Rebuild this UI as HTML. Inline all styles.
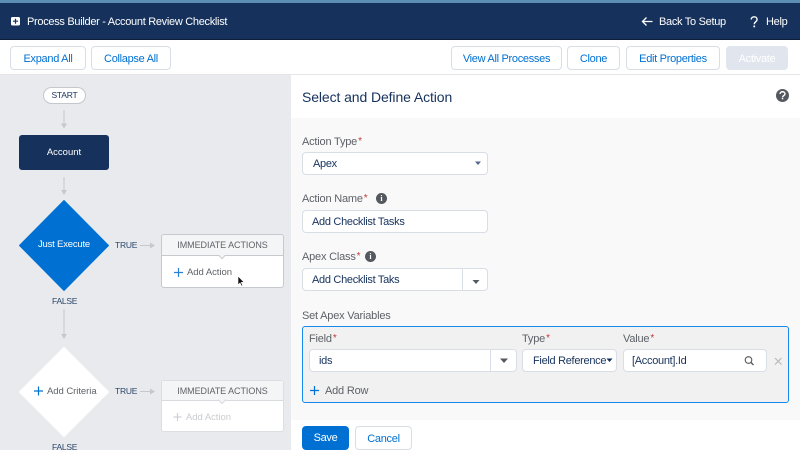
<!DOCTYPE html>
<html><head><meta charset="utf-8"><style>
*{box-sizing:border-box}
html,body{margin:0;padding:0}
body{width:800px;height:450px;overflow:hidden;position:relative;background:#fff;font-family:"Liberation Sans",sans-serif;font-size:11px;letter-spacing:-.3px;color:#16325c}
.a{position:absolute;white-space:nowrap}
.btn{position:absolute;top:46px;height:24px;border:1px solid #d8dde6;border-radius:4px;background:#fff;color:#0070d2;text-align:center;line-height:24px;font-size:11px}
.lab{position:absolute;white-space:nowrap;color:#5e6268;font-size:11px;letter-spacing:-.2px;line-height:14px}
.lab i{color:#c23934;font-style:normal;font-size:10px;margin-left:1px;position:relative;top:-1px}
.inp{position:absolute;background:#fff;border:1px solid #d8dde6;border-radius:4px;height:23px;line-height:22px;color:#16325c;font-size:11px;white-space:nowrap;overflow:hidden}
.flow{position:absolute;font-size:8.500px;letter-spacing:-.25px;color:#2b4669;white-space:nowrap;line-height:11px}
.info{position:absolute;width:11px;height:11px;border-radius:50%;background:#54595f;color:#fff;font:bold 8px/11px "Liberation Serif",serif;letter-spacing:0;text-align:center}
.g{color:#5f6368;font-size:9px;letter-spacing:-.05px;line-height:11px}
svg{position:absolute;left:0;top:0}
</style></head><body>
<div class="a" style="left:0;top:0;width:800px;height:3px;background:#5d8fb5"></div>
<div class="a" style="left:0;top:3px;width:800px;height:37px;background:#16325c;border-bottom:1px solid #0e1f3a"></div>
<div class="a" style="left:27px;top:16px;color:#fff;line-height:13px">Process Builder - Account Review Checklist</div>
<div class="a" style="left:659px;top:16px;color:#fff;line-height:13px">Back To Setup</div>
<div class="a" style="left:766px;top:16px;color:#fff;line-height:13px">Help</div>

<div class="a" style="left:0;top:74px;width:800px;height:1px;background:#e3e5e8"></div>
<div class="btn" style="left:10px;width:76px">Expand All</div>
<div class="btn" style="left:91px;width:80px">Collapse All</div>
<div class="btn" style="left:451px;width:111px">View All Processes</div>
<div class="btn" style="left:567px;width:53px">Clone</div>
<div class="btn" style="left:626px;width:94px">Edit Properties</div>
<div class="btn" style="left:726px;width:62px;background:#e0e5ee;border-color:#e0e5ee;color:#fff">Activate</div>

<div class="a" style="left:0;top:75px;width:291px;height:375px;background:#e8eaed"></div>
<div class="a" style="left:291px;top:118px;width:509px;height:302px;background:#f9f9f9"></div>
<div class="a" style="left:302px;top:89px;font-size:14px;letter-spacing:-.1px;color:#16325c">Select and Define Action</div>

<svg width="800" height="450" viewBox="0 0 800 450">
<g fill="none" stroke="#c5c8cc" stroke-width="1">
<path d="M64 110v17M64 177v17M64 309v29M140 245.500h13M140 391.500h13"/>
</g>
<g fill="#c5c8cc">
<path d="M61 123.500h6l-3 5zM61 190h6l-3 5zM61 334h6l-3 5zM150 242.500v6l5-3zM150 388.500v6l5-3z"/>
</g>
<path d="M64 200.500 L108.500 245.500 L64 290.500 L19.500 245.500Z" fill="#0070d2" stroke="#0070d2" stroke-width="1" stroke-linejoin="round"/>
<path d="M64 347.500 L108.500 392 L64 436.500 L19.500 392Z" fill="#fff" stroke="#fff" stroke-width="1" stroke-linejoin="round"/>
</svg>

<div class="a" style="left:43px;top:87px;width:43px;height:17px;border:1.500px solid #c4c7cc;border-radius:9px;background:#fff;font-size:8.500px;letter-spacing:-.2px;text-align:center;line-height:15px;color:#16325c">START</div>
<div class="a" style="left:19px;top:135px;width:90px;height:35px;background:#16325c;border-radius:3px;color:#fff;font-size:9.500px;letter-spacing:0;text-align:center;line-height:36px">Account</div>
<div class="a" style="left:19px;top:239px;width:90px;color:#fff;font-size:9.500px;letter-spacing:-.2px;line-height:11px;text-align:center">Just Execute</div>
<div class="a g" style="left:47px;top:386px;font-size:9.500px">Add Criteria</div>
<div class="flow" style="left:115px;top:240px">TRUE</div>
<div class="flow" style="left:115px;top:386px">TRUE</div>
<div class="flow" style="left:52px;top:296px">FALSE</div>
<div class="flow" style="left:52px;top:442px">FALSE</div>

<!-- action box 1 -->
<div class="a" style="left:161px;top:234px;width:123px;height:54px;background:#fff;border:1.500px solid #c6c9cd;border-radius:3px"></div>
<div class="a" style="left:219px;top:252px;width:6px;height:6px;transform:rotate(45deg);border-right:1px solid #c6c9cd;border-bottom:1px solid #c6c9cd;background:#f4f5f6"></div>
<div class="a g" style="left:162px;top:235px;width:121px;height:21px;background:#f4f5f6;border-bottom:1px solid #c6c9cd;border-radius:2px 2px 0 0;text-align:center;line-height:21px">IMMEDIATE ACTIONS</div>
<div class="a" style="left:220px;top:253px;width:4px;height:4px;transform:rotate(45deg);background:#f4f5f6"></div>
<div class="a g" style="left:187px;top:267px;font-size:9.500px">Add Action</div>

<!-- action box 2 -->
<div class="a" style="left:161px;top:380px;width:123px;height:52px;background:#fff;border:1px solid #dcdee1;border-radius:3px"></div>
<div class="a g" style="left:162px;top:381px;width:121px;height:20px;background:#f4f5f6;border-bottom:1px solid #d8dade;text-align:center;line-height:20px">IMMEDIATE ACTIONS</div>
<div class="a" style="left:219px;top:397px;width:6px;height:6px;transform:rotate(45deg);background:#f4f5f6;border-right:1px solid #d8dade;border-bottom:1px solid #d8dade"></div>
<div class="a g" style="left:186px;top:412px;color:#c9cccf;font-size:9.500px">Add Action</div>

<!-- form -->
<div class="lab" style="left:302px;top:135px">Action Type<i>*</i></div>
<div class="inp" style="left:302px;top:152px;width:186px;padding-left:10px">Apex</div>
<div class="lab" style="left:302px;top:192px">Action Name<i>*</i></div>
<div class="info" style="left:376px;top:193px">i</div>
<div class="inp" style="left:302px;top:210px;width:186px;padding-left:9px;line-height:23px">Add Checklist Tasks</div>
<div class="lab" style="left:302px;top:250px">Apex Class<i>*</i></div>
<div class="info" style="left:365px;top:251px">i</div>
<div class="inp" style="left:302px;top:268px;width:186px;padding-left:9px;line-height:23px">Add Checklist Taks</div>
<div class="a" style="left:462px;top:269px;width:1px;height:22px;background:#d8dde6"></div>

<div class="lab" style="left:302px;top:309px">Set Apex Variables</div>
<div class="a" style="left:302px;top:326px;width:487px;height:77px;background:#f1f1f1;border:1px solid #1589ee;border-radius:3px"></div>
<div class="lab" style="left:309px;top:332px">Field<i>*</i></div>
<div class="lab" style="left:522px;top:332px">Type<i>*</i></div>
<div class="lab" style="left:623px;top:332px">Value<i>*</i></div>
<div class="inp" style="left:309px;top:349px;width:208px;padding-left:9px">ids</div>
<div class="a" style="left:490px;top:350px;width:1px;height:22px;background:#d8dde6"></div>
<div class="inp" style="left:522px;top:349px;width:95px;padding-left:10px">Field Reference</div>
<div class="inp" style="left:623px;top:349px;width:144px;padding-left:8px">[Account].Id</div>
<div class="lab" style="left:325px;top:384px">Add Row</div>

<div class="a" style="left:302px;top:426px;width:47px;height:24px;background:#0070d2;border-radius:4px;color:#fff;text-align:center;line-height:25px">Save</div>
<div class="a" style="left:355px;top:426px;width:57px;height:24px;background:#fff;border:1px solid #d8dde6;border-radius:4px;color:#0070d2;text-align:center;line-height:24px">Cancel</div>

<svg width="800" height="450" viewBox="0 0 800 450">
<rect x="11" y="17" width="9" height="8.500" rx="1.500" fill="#fff"/>
<path d="M15.500 18.700v5M13 21.200h5" stroke="#16325c" stroke-width="1.200"/>
<path d="M642.500 21.500h10M646.500 17.500l-4 4 4 4" fill="none" stroke="#fff" stroke-width="1.300"/>
<path d="M751.200 19.500c.2-3.600 5.900-3.600 5.900 0 0 2.400-2.900 2.300-2.900 4.800" fill="none" stroke="#fff" stroke-width="1.400"/><rect x="753.400" y="25.500" width="1.700" height="1.800" fill="#fff"/>
<circle cx="782.500" cy="95.500" r="6.500" fill="#54595f"/>
<path d="M780 94c0-3 5-3 5 0 0 1.700-2.500 1.600-2.500 3.300" fill="none" stroke="#fff" stroke-width="1.400"/><rect x="781.800" y="97.800" width="1.500" height="1.500" fill="#fff"/>
<path d="M174 272.500h9M178.500 268v9" stroke="#2a7fd6" stroke-width="1.200" fill="none"/>
<path d="M34 391h9M38.500 386.500v9" stroke="#0070d2" stroke-width="1.200" fill="none"/>
<path d="M173.500 417h8M177.500 413v8" stroke="#cfd2d6" stroke-width="1.200" fill="none"/>
<path d="M310 390.500h9M314.500 386v9" stroke="#0070d2" stroke-width="1.200" fill="none"/>
<path d="M238 276v9l2-2 1.500 3 1.200-.6-1.500-3h3z" fill="#111" stroke="#fff" stroke-width=".6"/>
<path d="M475 161.500h6l-3 3.500z" fill="#54698d"/>
<path d="M472.500 280h7l-3.500 4z" fill="#54595f"/>
<path d="M500 358.500h8l-4 4.500z" fill="#54595f"/>
<path d="M606.500 358.500h6l-3 3.500z" fill="#16325c"/>
<circle cx="748.500" cy="360" r="3.300" fill="none" stroke="#54595f" stroke-width="1.100"/>
<path d="M751 362.500l2.500 2.500" stroke="#54595f" stroke-width="1.300"/>
<path d="M775 358l6.500 6.500M781.500 358l-6.500 6.500" stroke="#b4b7bb" stroke-width="1.100"/>
</svg>
</body></html>
